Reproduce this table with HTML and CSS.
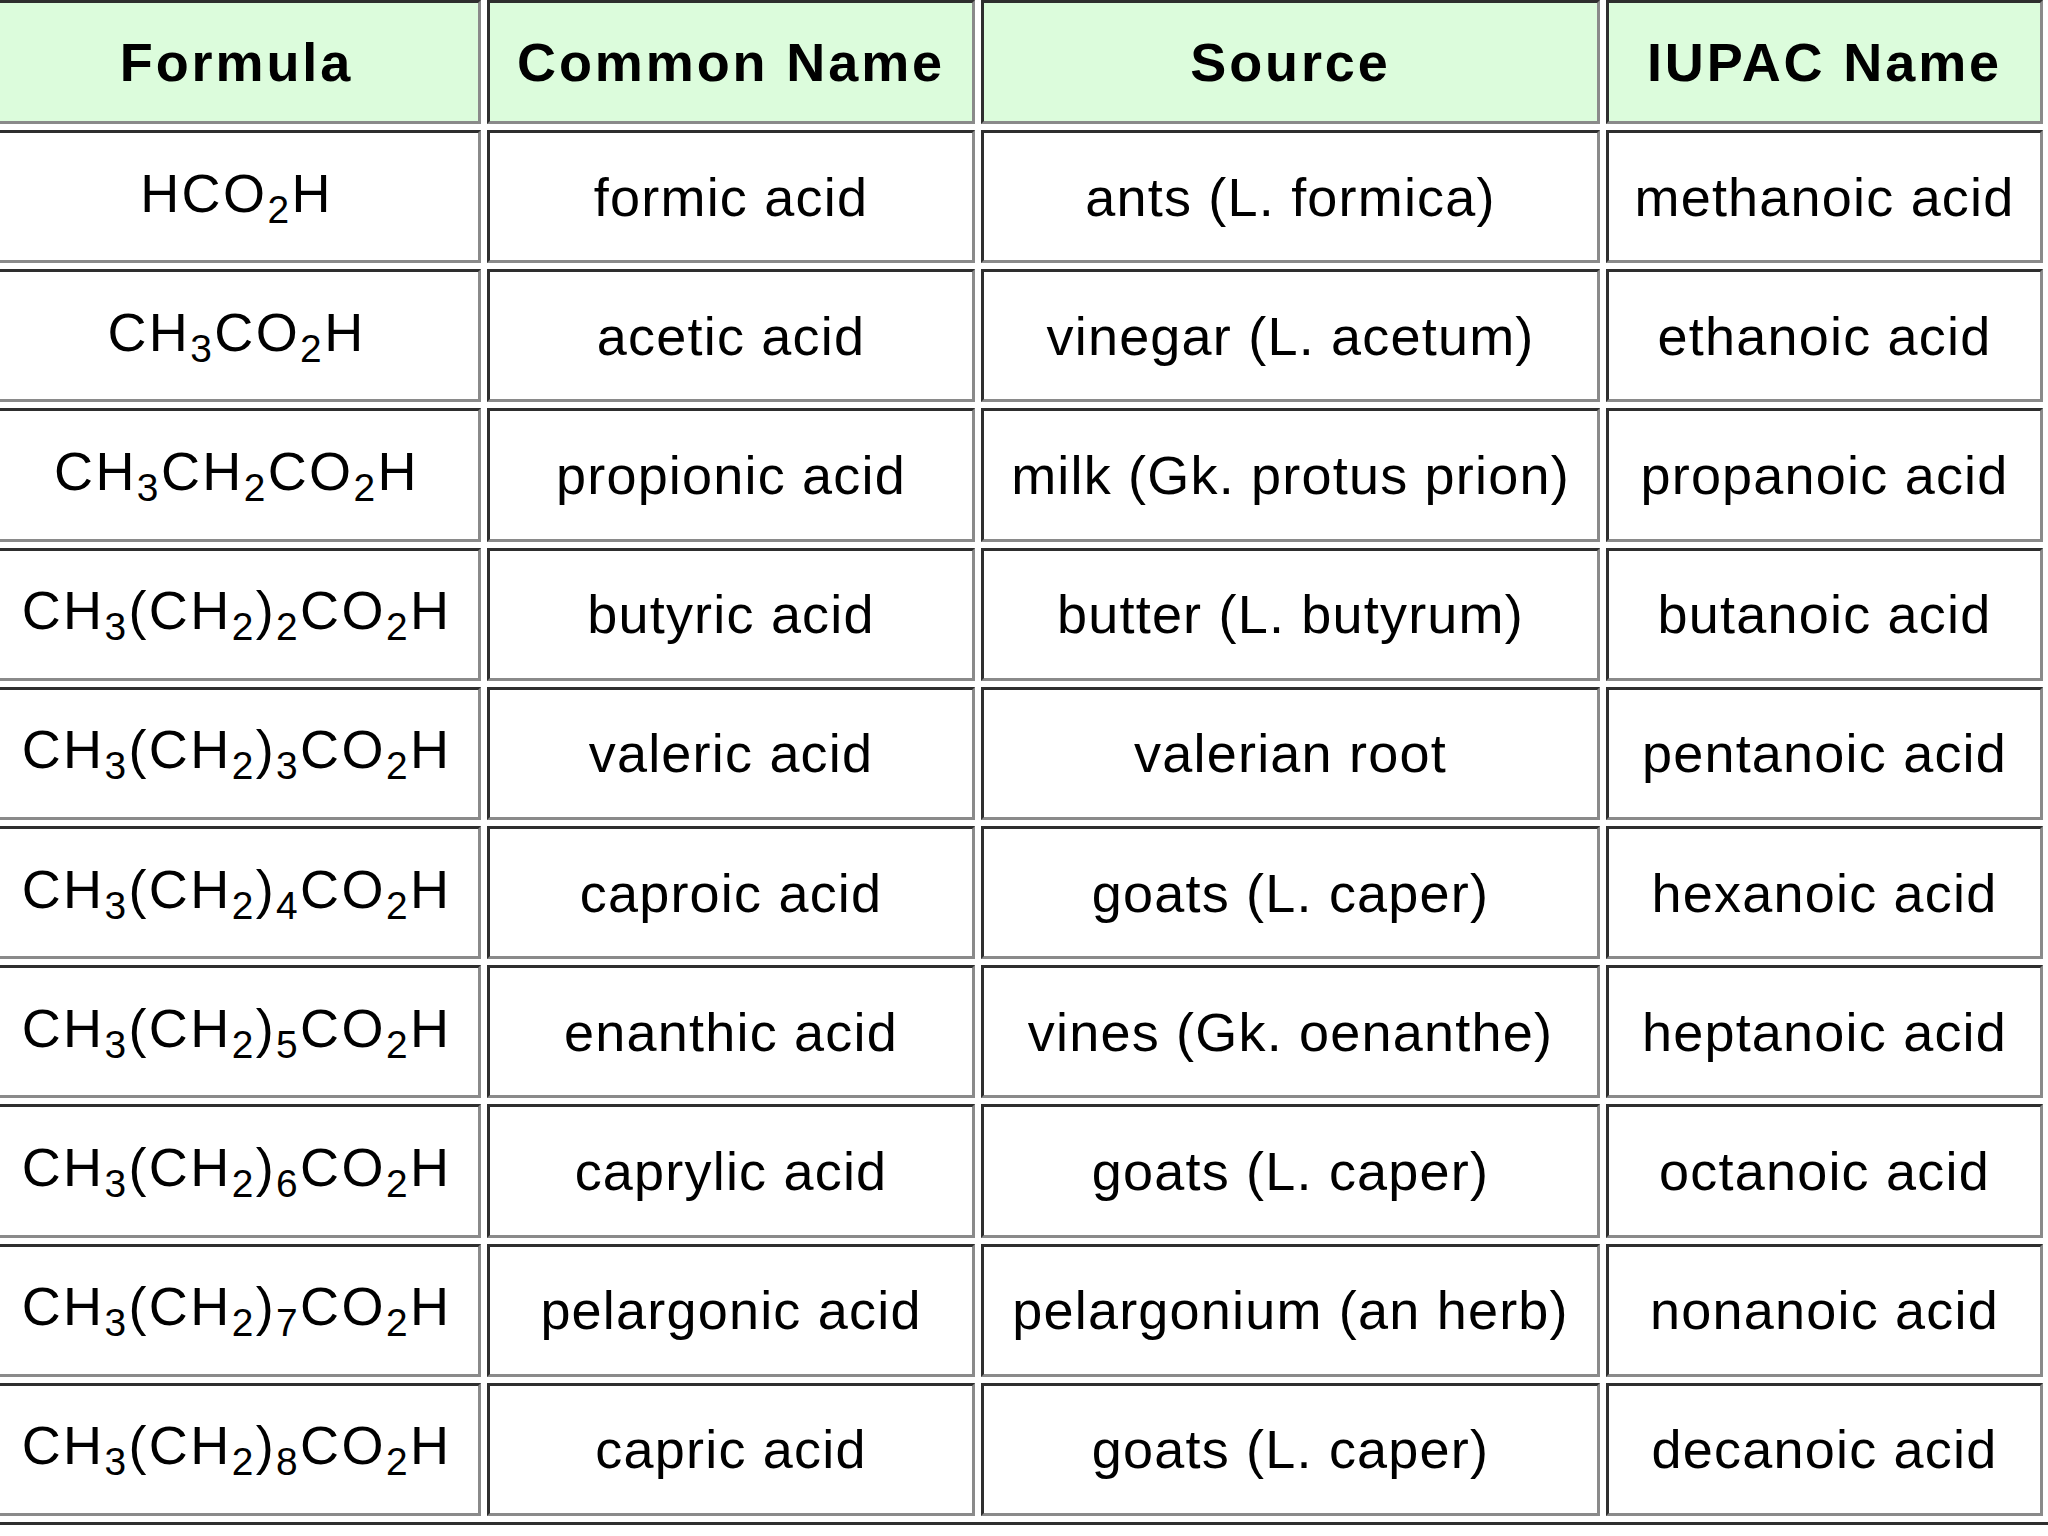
FILE: index.html
```html
<!DOCTYPE html>
<html>
<head>
<meta charset="utf-8">
<link rel="stylesheet" href="styles.css">
</head>
<body>
<table class="acids">
  <tr class="head-row">
    <th class="c1">Formula</th>
    <th class="c2">Common Name</th>
    <th class="c3">Source</th>
    <th class="c4">IUPAC Name</th>
  </tr>
  <tr class="row">
    <td class="formula">HCO<sub>2</sub>H</td>
    <td>formic acid</td>
    <td>ants (L. formica)</td>
    <td>methanoic acid</td>
  </tr>
  <tr class="row">
    <td class="formula">CH<sub>3</sub>CO<sub>2</sub>H</td>
    <td>acetic acid</td>
    <td>vinegar (L. acetum)</td>
    <td>ethanoic acid</td>
  </tr>
  <tr class="row">
    <td class="formula">CH<sub>3</sub>CH<sub>2</sub>CO<sub>2</sub>H</td>
    <td>propionic acid</td>
    <td>milk (Gk. protus prion)</td>
    <td>propanoic acid</td>
  </tr>
  <tr class="row">
    <td class="formula">CH<sub>3</sub>(CH<sub>2</sub>)<sub>2</sub>CO<sub>2</sub>H</td>
    <td>butyric acid</td>
    <td>butter (L. butyrum)</td>
    <td>butanoic acid</td>
  </tr>
  <tr class="row">
    <td class="formula">CH<sub>3</sub>(CH<sub>2</sub>)<sub>3</sub>CO<sub>2</sub>H</td>
    <td>valeric acid</td>
    <td>valerian root</td>
    <td>pentanoic acid</td>
  </tr>
  <tr class="row">
    <td class="formula">CH<sub>3</sub>(CH<sub>2</sub>)<sub>4</sub>CO<sub>2</sub>H</td>
    <td>caproic acid</td>
    <td>goats (L. caper)</td>
    <td>hexanoic acid</td>
  </tr>
  <tr class="row">
    <td class="formula">CH<sub>3</sub>(CH<sub>2</sub>)<sub>5</sub>CO<sub>2</sub>H</td>
    <td>enanthic acid</td>
    <td>vines (Gk. oenanthe)</td>
    <td>heptanoic acid</td>
  </tr>
  <tr class="row">
    <td class="formula">CH<sub>3</sub>(CH<sub>2</sub>)<sub>6</sub>CO<sub>2</sub>H</td>
    <td>caprylic acid</td>
    <td>goats (L. caper)</td>
    <td>octanoic acid</td>
  </tr>
  <tr class="row">
    <td class="formula">CH<sub>3</sub>(CH<sub>2</sub>)<sub>7</sub>CO<sub>2</sub>H</td>
    <td>pelargonic acid</td>
    <td>pelargonium (an herb)</td>
    <td>nonanoic acid</td>
  </tr>
  <tr class="row">
    <td class="formula">CH<sub>3</sub>(CH<sub>2</sub>)<sub>8</sub>CO<sub>2</sub>H</td>
    <td>capric acid</td>
    <td>goats (L. caper)</td>
    <td>decanoic acid</td>
  </tr>
</table>
</body>
</html>
```

FILE: styles.css
```css
html, body {
  margin: 0;
  padding: 0;
  background: #ffffff;
  overflow: hidden;
}

.acids {
  width: 2069px;
  margin: -9px 0 0 -17px;
  border-collapse: separate;
  border-spacing: 6px;
  table-layout: fixed;
  border-style: solid;
  border-width: 3px;
  border-color: #a0a0a0 #2e2e2e #2e2e2e #a0a0a0;
  font-family: "Liberation Sans", Arial, sans-serif;
  color: #000;
}

.acids th,
.acids td {
  box-sizing: border-box;
  padding: 0;
  text-align: center;
  vertical-align: middle;
  border-style: solid;
  border-width: 3px;
  border-color: #2e2e2e #8a8a8a #8a8a8a #2e2e2e;
  white-space: nowrap;
}

.acids th {
  background: #dcfcdc;
  font-size: 54px;
  font-weight: bold;
  letter-spacing: 2.9px;
}

.acids td {
  background: #ffffff;
  font-size: 54px;
  letter-spacing: 1.2px;
}

.acids td.formula {
  letter-spacing: 2.4px;
}

.c1 { width: 489px; }
.c2 { width: 488px; }
.c3 { width: 619px; }
.c4 { width: 437px; }

.head-row { height: 124px; }
.row { height: 133.2px; }

.acids sub {
  font-size: 0.72em;
  vertical-align: -11px;
}
```
